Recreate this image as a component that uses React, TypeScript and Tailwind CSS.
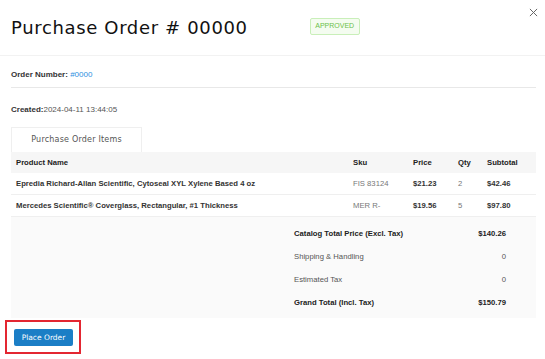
const items = [
  {
    name: 'Epredia Richard-Allan Scientific, Cytoseal XYL Xylene Based 4 oz',
    sku: 'FIS 83124',
    price: '$21.23',
    qty: '2',
    subtotal: '$42.46',
  },
  {
    name: 'Mercedes Scientific® Coverglass, Rectangular, #1 Thickness',
    sku: 'MER R-',
    price: '$19.56',
    qty: '5',
    subtotal: '$97.80',
  },
]

const totals = [
  { label: 'Catalog Total Price (Excl. Tax)', value: '$140.26', bold: true },
  { label: 'Shipping & Handling', value: '0', bold: false },
  { label: 'Estimated Tax', value: '0', bold: false },
  { label: 'Grand Total (Incl. Tax)', value: '$150.79', bold: true },
]

const cols = 'grid grid-cols-[337px_60px_45px_29px_1fr]'

export default function App() {
  return (
    <div className="relative w-[545px] h-[359px] overflow-hidden bg-white font-['Liberation_Sans',Arial,sans-serif] text-[#333]">
      <header className="flex items-center h-[56px] pl-[11px] border-b border-[#f2f2f2]">
        <h1 className="font-['DejaVu_Sans',sans-serif] text-[18px] tracking-[0.65px] text-[#111] leading-none">
          Purchase Order # 00000
        </h1>
        <span className="ml-[62px] mt-[-2px] flex items-center justify-center w-[50px] h-[17px] rounded-[2px] border border-[#c9efb9] bg-[#f4fcf0] text-[7px] text-[#6cbf4a]">
          APPROVED
        </span>
        <button className="absolute top-[8px] right-[7px] text-[#666]">
          <svg width="9" height="9" viewBox="0 0 10 10" fill="none" stroke="currentColor" strokeWidth="1.1">
            <path d="M1 1l8 8M9 1l-8 8" />
          </svg>
        </button>
      </header>

      <div className="pl-[11px] pr-[9px]">
        <div className="pt-[13px] pb-[6px] border-b border-[#e8e8e8] text-[8px] leading-[12px]">
          <span className="font-semibold text-[#333]">Order Number: </span>
          <span className="text-[#2e8fe0]">#0000</span>
        </div>
        <div className="mt-[16px] text-[8px] leading-[12px]">
          <span className="font-semibold">Created:</span>
          <span className="text-[#555]">2024-04-11 13:44:05</span>
        </div>

        <div className="mt-[11px] flex">
          <div className="w-[131px] h-[25px] flex items-center justify-center border border-b-0 border-[#efefef] font-['DejaVu_Sans',sans-serif] text-[8px] tracking-[0.2px] text-[#555]">
            Purchase Order Items
          </div>
        </div>

        <div className={`${cols} h-[21px] items-center bg-[#f6f6f6] text-[7.7px] font-bold text-[#222]`}>
          <div className="pl-[5px]">Product Name</div>
          <div className="pl-[5px]">Sku</div>
          <div className="pl-[5px]">Price</div>
          <div className="pl-[5px]">Qty</div>
          <div className="pl-[5px]">Subtotal</div>
        </div>
        {items.map((it) => (
          <div key={it.sku} className={`${cols} h-[22px] items-center border-b border-[#efefef] text-[7.7px]`}>
            <div className="pl-[5px] font-semibold text-[#333] whitespace-nowrap">{it.name}</div>
            <div className="pl-[5px] text-[#777]">{it.sku}</div>
            <div className="pl-[5px] font-bold">{it.price}</div>
            <div className="pl-[5px] text-[#777]">{it.qty}</div>
            <div className="pl-[5px] font-bold">{it.subtotal}</div>
          </div>
        ))}

        <div className="bg-[#fafafa] pt-[5px] pb-[4px]">
          {totals.map((t) => (
            <div key={t.label} className={`flex items-center h-[23px] ml-[283px] text-[7.7px] ${t.bold ? 'font-bold text-[#222]' : 'text-[#555]'}`}>
              <div className="w-[160px]">{t.label}</div>
              <div className="w-[52px] text-right">{t.value}</div>
            </div>
          ))}
        </div>
      </div>

      <div className="ml-[5px] mt-[2px] w-[76px] h-[34px] border-2 border-[#e32631] pt-[7px] pl-[7px] flex items-start">
        <button className="flex items-center justify-center w-[59px] h-[17px] rounded-[2px] bg-[#1b7ec6] font-['DejaVu_Sans',sans-serif] text-white text-[7.5px] leading-none">
          Place Order
        </button>
      </div>
    </div>
  )
}
